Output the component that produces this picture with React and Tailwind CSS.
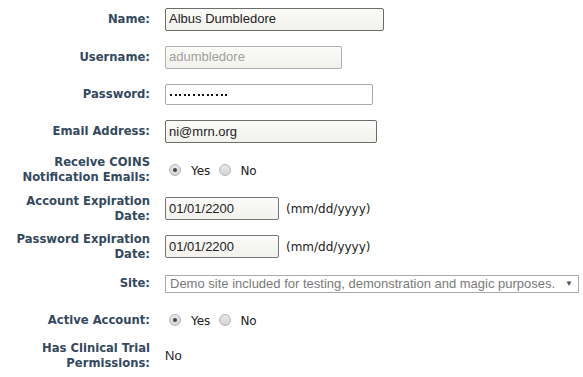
import React from "react";

const labelCls =
  "w-[150px] shrink-0 text-right font-bold text-[11.6px] leading-[15px] text-[#34495e] [font-family:'DejaVu_Sans',Verdana,sans-serif]";
const inputFont = "[font-family:'Liberation_Sans',Arial,sans-serif] text-[13px]";

function Row({ label, h, children }) {
  return (
    <div className={`flex items-center gap-[15px] ${h}`}>
      <div className={labelCls}>{label}</div>
      <div className="flex items-center">{children}</div>
    </div>
  );
}

function Radio({ checked }) {
  return (
    <span className="flex h-[12px] w-[12px] items-center justify-center rounded-full border border-[#b5b5b5] bg-gradient-to-b from-[#e8e8e8] to-[#d4d4d4]">
      {checked && <span className="h-[4px] w-[4px] rounded-full bg-[#444]" />}
    </span>
  );
}

function YesNo() {
  return (
    <div className="flex items-center pl-[4px] text-[12px] text-[#222] [font-family:'DejaVu_Sans',Verdana,sans-serif]">
      <Radio checked />
      <span className="ml-[10px] mt-[2px]">Yes</span>
      <span className="ml-[9px]">
        <Radio />
      </span>
      <span className="ml-[9px] mt-[2px]">No</span>
    </div>
  );
}

function TextBox({ w, h = "h-[23px]", border = "border-[#6b6b6b]", bg = "bg-gradient-to-b from-[#fbfbf9] to-[#f2f1ec]", color = "text-[#222]", children }) {
  return (
    <div className={`flex items-center border ${border} ${bg} ${w} ${h} px-[3px] ${inputFont} ${color} rounded-[2px]`}>
      {children}
    </div>
  );
}

const dots = Array.from({ length: 13 });

export default function App() {
  return (
    <div className="w-[583px] h-[377px] bg-white overflow-hidden">
      <div className="flex flex-col">
        <Row label="Name:" h="h-[38px]">
          <TextBox w="w-[219px]">Albus Dumbledore</TextBox>
        </Row>
        <Row label="Username:" h="h-[38px]">
          <TextBox w="w-[177px]" border="border-[#b0b0b0]" color="text-[#a0a0a0]">adumbledore</TextBox>
        </Row>
        <Row label="Password:" h="h-[37px]">
          <TextBox w="w-[208px]" h="h-[21px]" border="border-[#aaaaaa]" bg="bg-white">
            <span className="flex items-center gap-[2.6px] pl-[1px]">
              {dots.map((_, i) => (
                <span key={i} className="h-[2px] w-[2px] bg-[#111]" />
              ))}
            </span>
          </TextBox>
        </Row>
        <Row label="Email Address:" h="h-[37px]">
          <TextBox w="w-[212px]">ni@mrn.org</TextBox>
        </Row>
        <Row label={<>Receive COINS<br />Notification Emails:</>} h="h-[40px]">
          <YesNo />
        </Row>
        <Row label={<>Account Expiration<br />Date:</>} h="h-[37px]">
          <TextBox w="w-[114px]" border="border-[#777]">01/01/2200</TextBox>
          <span className="ml-[7px] text-[12px] text-[#222] [font-family:'DejaVu_Sans',Verdana,sans-serif]">(mm/dd/yyyy)</span>
        </Row>
        <Row label={<>Password Expiration<br />Date:</>} h="h-[39px]">
          <TextBox w="w-[114px]" border="border-[#777]">01/01/2200</TextBox>
          <span className="ml-[7px] text-[12px] text-[#222] [font-family:'DejaVu_Sans',Verdana,sans-serif]">(mm/dd/yyyy)</span>
        </Row>
        <Row label="Site:" h="h-[35px]">
          <div className={`flex h-[18px] w-[414px] items-center justify-between border border-[#aaaaaa] bg-white pl-[4px] pr-[5px] ${inputFont} text-[#7a7a7a]`}>
            <span className="whitespace-nowrap">Demo site included for testing, demonstration and magic purposes.</span>
            <span className="text-[8px] text-[#555]">▼</span>
          </div>
        </Row>
        <Row label="Active Account:" h="h-[38px]">
          <YesNo />
        </Row>
        <Row label={<>Has Clinical Trial<br />Permissions:</>} h="h-[33px]">
          <span className={`${inputFont} text-[#222]`}>No</span>
        </Row>
      </div>
    </div>
  );
}
